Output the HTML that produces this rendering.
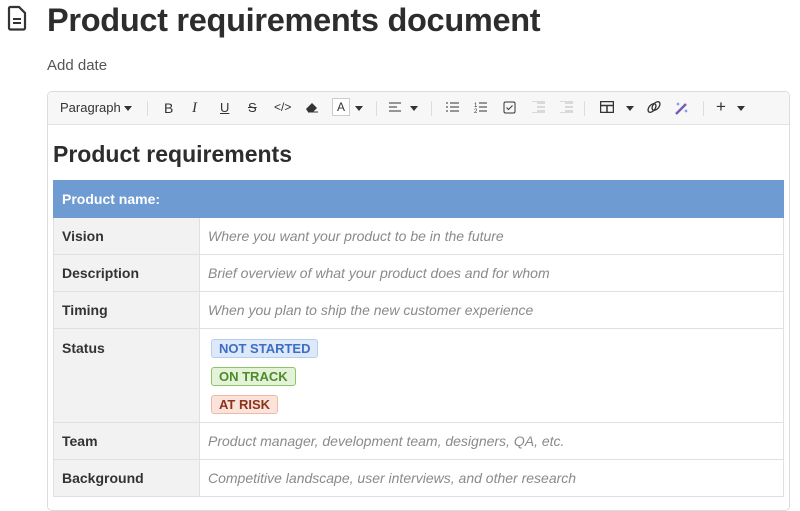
<!DOCTYPE html>
<html><head><style>
*{margin:0;padding:0;box-sizing:border-box}
body{width:800px;height:496px;overflow:hidden;background:#fff;font-family:"Liberation Sans",Arial,sans-serif;color:#333;position:relative}
.abs{position:absolute}
h1{position:absolute;left:47px;top:2px;font-size:32.5px;font-weight:bold;color:#2d2d2d;letter-spacing:-0.3px}
.date{left:47px;top:57px;font-size:15px;color:#555}
.editor{left:47px;top:91px;width:743px;height:420px;border:1px solid #dcdcdc;border-radius:5px}
.tb{left:48px;top:92px;width:741px;height:33px;background:#f7f7f7;border-bottom:1px solid #e2e2e2;border-radius:5px 5px 0 0;font-size:13px;color:#333}
.tb span{position:absolute;top:8px}
.sep{position:absolute;top:9px;width:1px;height:15px;background:#ddd}
.tri{display:inline-block;width:0;height:0;border-left:4px solid transparent;border-right:4px solid transparent;border-top:5px solid #333;vertical-align:middle}
h2{position:absolute;left:53px;top:141px;font-size:23px;font-weight:bold;color:#2d2d2d}
table{position:absolute;left:53px;top:180px;width:731px;border-collapse:collapse;font-size:14px}
td{border:1px solid #e0e0e0;padding:0 8px;height:37px;vertical-align:middle}
td.l{width:146px;background:#f2f2f2;font-weight:bold;color:#333}
td.r{color:#8a8a8a;font-style:italic}
tr.h td{background:#6f9bd3;color:#fff;font-weight:bold;border-color:#6f9bd3;height:37px}
.tag{display:inline-block;font-size:13px;font-weight:bold;padding:1px 7px;border-radius:3px;border:1px solid;line-height:15px;margin-left:3px}
</style></head><body>
<svg class="abs" style="left:7px;top:5px" width="20" height="26" viewBox="0 0 20 26"><path d="M3 2h9l6 6v15a1.5 1.5 0 0 1-1.5 1.5h-13A1.5 1.5 0 0 1 2 23V3.5A1.5 1.5 0 0 1 3 2z" fill="none" stroke="#333" stroke-width="2.2"/><path d="M6 14h8M6 18h8" stroke="#333" stroke-width="2"/></svg>
<h1>Product requirements document</h1>
<div class="abs date">Add date</div>
<div class="abs editor"></div>
<div class="abs tb">
<span style="left:12px">Paragraph <i class="tri"></i></span>
<div class="sep" style="left:99px"></div>
<span style="left:116px;font-size:14px">B</span>
<span style="left:144px;font-style:italic;font-family:'Liberation Serif';font-size:15px">I</span>
<span style="left:172px;text-decoration:underline">U</span>
<span style="left:200px;text-decoration:line-through">S</span>
<span style="left:226px;font-size:12px">&lt;/&gt;</span>
<span style="left:257px;top:9px"><svg width="14" height="12"><path d="M1 8l6-6 5 5-4 4H3z" fill="#333"/><path d="M3 11h10" stroke="#333"/></svg></span>
<span style="left:284px;top:6px;border:1px solid #ccc;background:#fff;padding:1px 4px;font-size:12px">A</span>
<span style="left:307px"><i class="tri"></i></span>
<div class="sep" style="left:328px"></div>
<span style="left:341px;top:9px"><svg width="12" height="12"><path d="M0 2h12M0 6h8M0 10h12" stroke="#333"/></svg></span>
<span style="left:362px"><i class="tri"></i></span>
<div class="sep" style="left:383px"></div>
<span style="left:398px;top:9px"><svg width="13" height="12"><path d="M4 2h9M4 6h9M4 10h9M0 2h2M0 6h2M0 10h2" stroke="#333"/></svg></span>
<span style="left:426px;top:9px"><svg width="13" height="12"><path d="M5 2h8M5 6h8M5 10h8" stroke="#333"/><text x="0" y="6" font-size="6" fill="#333">1</text><text x="0" y="12" font-size="6" fill="#333">2</text></svg></span>
<span style="left:455px;top:9px"><svg width="13" height="13"><rect x="1" y="1" width="11" height="11" rx="1.5" fill="none" stroke="#333"/><path d="M3.5 6.5l2 2 4-4" fill="none" stroke="#333"/></svg></span>
<span style="left:484px;top:9px"><svg width="13" height="12"><path d="M5 2h8M5 6h8M5 10h8M0 0h13M0 12h13" stroke="#bbb"/></svg></span>
<span style="left:512px;top:9px"><svg width="13" height="12"><path d="M5 2h8M5 6h8M5 10h8M0 0h13M0 12h13" stroke="#bbb"/></svg></span>
<div class="sep" style="left:536px"></div>
<span style="left:552px;top:9px"><svg width="14" height="12"><rect x="0.5" y="0.5" width="13" height="11" rx="1" fill="none" stroke="#333" stroke-width="1.5"/><path d="M0 4.5h14M7 4v8" stroke="#333" stroke-width="1.5"/></svg></span>
<span style="left:578px"><i class="tri"></i></span>
<span style="left:598px;top:8px"><svg width="16" height="14"><ellipse cx="6" cy="8" rx="3" ry="5" transform="rotate(40 6 8)" fill="none" stroke="#333" stroke-width="1.3"/><ellipse cx="10" cy="6" rx="3" ry="5" transform="rotate(40 10 6)" fill="none" stroke="#333" stroke-width="1.3"/></svg></span>
<span style="left:626px;top:8px"><svg width="15" height="15"><path d="M2 14L12 4" stroke="#7a5bb5" stroke-width="2.5"/><path d="M4 2l.5 1.5L6 4l-1.5.5L4 6l-.5-1.5L2 4l1.5-.5zM12 9l.5 1.5 1.5.5-1.5.5-.5 1.5-.5-1.5-1.5-.5 1.5-.5z" fill="#4a7ad0"/></svg></span>
<div class="sep" style="left:655px"></div>
<span style="left:668px;font-size:17px;top:5px">+</span>
<span style="left:689px"><i class="tri"></i></span>
</div>
<h2>Product requirements</h2>
<table>
<tr class="h"><td colspan="2">Product name:</td></tr>
<tr><td class="l">Vision</td><td class="r">Where you want your product to be in the future</td></tr>
<tr><td class="l">Description</td><td class="r">Brief overview of what your product does and for whom</td></tr>
<tr><td class="l">Timing</td><td class="r">When you plan to ship the new customer experience</td></tr>
<tr><td class="l" style="vertical-align:top;padding-top:11px;height:94px">Status</td><td style="vertical-align:top;padding-top:10px">
<div><span class="tag" style="background:#dde9f9;border-color:#b5cdee;color:#3d6dc4">NOT STARTED</span></div>
<div style="margin-top:9px"><span class="tag" style="background:#e4f3d8;border-color:#8dc46a;color:#4f8a2c">ON TRACK</span></div>
<div style="margin-top:9px"><span class="tag" style="background:#fbe3db;border-color:#efb9a6;color:#8b3419">AT RISK</span></div>
</td></tr>
<tr><td class="l">Team</td><td class="r">Product manager, development team, designers, QA, etc.</td></tr>
<tr><td class="l">Background</td><td class="r">Competitive landscape, user interviews, and other research</td></tr>
</table>
</body></html>
